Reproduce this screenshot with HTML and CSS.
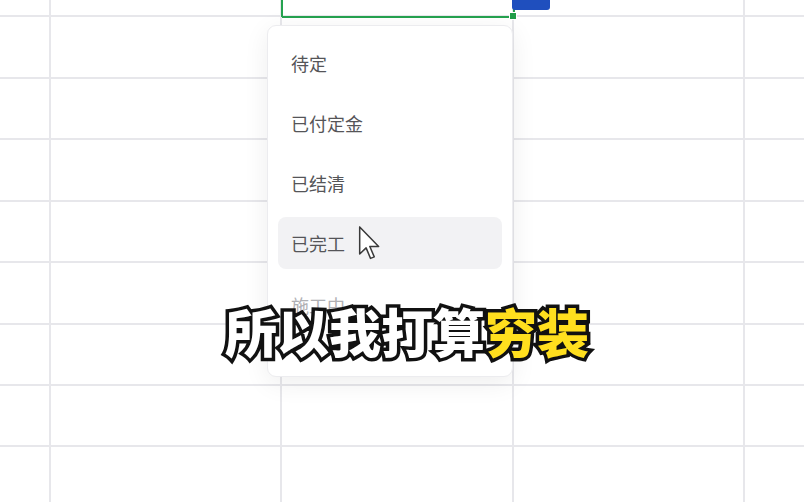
FILE: index.html
```html
<!DOCTYPE html>
<html lang="zh-CN">
<head>
<meta charset="utf-8">
<title>Sheet dropdown</title>
<link rel="stylesheet" href="styles.css">
</head>
<body>
<div class="stage">
  <div class="sheet">
    <div class="row">
      <div class="cell c1"></div><div class="cell c2"></div><div class="cell c3 selected"><span class="handle"></span></div><div class="cell c4"></div><div class="cell c5"></div>
    </div>
    <div class="row"><div class="cell c1"></div><div class="cell c2"></div><div class="cell c3"></div><div class="cell c4"></div><div class="cell c5"></div></div>
    <div class="row"><div class="cell c1"></div><div class="cell c2"></div><div class="cell c3"></div><div class="cell c4"></div><div class="cell c5"></div></div>
    <div class="row"><div class="cell c1"></div><div class="cell c2"></div><div class="cell c3"></div><div class="cell c4"></div><div class="cell c5"></div></div>
    <div class="row"><div class="cell c1"></div><div class="cell c2"></div><div class="cell c3"></div><div class="cell c4"></div><div class="cell c5"></div></div>
    <div class="row"><div class="cell c1"></div><div class="cell c2"></div><div class="cell c3"></div><div class="cell c4"></div><div class="cell c5"></div></div>
    <div class="row"><div class="cell c1"></div><div class="cell c2"></div><div class="cell c3"></div><div class="cell c4"></div><div class="cell c5"></div></div>
    <div class="row"><div class="cell c1"></div><div class="cell c2"></div><div class="cell c3"></div><div class="cell c4"></div><div class="cell c5"></div></div>
    <div class="row"><div class="cell c1"></div><div class="cell c2"></div><div class="cell c3"></div><div class="cell c4"></div><div class="cell c5"></div></div>
  </div>

  <div class="tag"></div>

  <div class="dropdown">
    <div class="item">待定</div>
    <div class="item">已付定金</div>
    <div class="item">已结清</div>
    <div class="item hover">已完工
      <svg class="cursor" width="22" height="36" viewBox="0 0 13 21" xmlns="http://www.w3.org/2000/svg">
        <path d="M1 1 L1 17 L4.8 13.4 L7.4 19.6 L9.6 18.7 L7 12.6 L12.2 12.6 Z" fill="#ffffff" stroke="#3a3a3a" stroke-width="0.9" stroke-linejoin="round"/>
      </svg>
    </div>
    <div class="item faded">施工中</div>
  </div>

  <div class="caption">所以我打算<span class="hl">穷装</span></div>
</div>
</body>
</html>
```

FILE: styles.css
```css
* { box-sizing: border-box; }
html, body {
  margin: 0;
  padding: 0;
  background: #ffffff;
}
.stage {
  position: relative;
  width: 804px;
  height: 502px;
  overflow: hidden;
  background: #ffffff;
  font-family: "Noto Sans CJK SC", "Noto Sans", sans-serif;
}
.sheet {
  margin-top: -44px;
  display: flex;
  flex-direction: column;
}
.row {
  display: flex;
  height: 61.43px;
  flex: none;
}
.cell {
  height: 100%;
  border-right: 2px solid #e7e7eb;
  border-bottom: 2px solid #e7e7eb;
  flex: none;
  position: relative;
}
.c1 { width: 51px; }
.c2 { width: 231px; }
.c3 { width: 232px; }
.c4 { width: 231px; }
.c5 { width: 80px; border-right: none; }

.selected {
  outline: 2px solid #25a24f;
  outline-offset: -1px;
}
.handle {
  position: absolute;
  right: -5px;
  bottom: -5px;
  width: 8px;
  height: 8px;
  background: #1f9d48;
  border: 1px solid #ffffff;
  z-index: 3;
}
.tag {
  position: absolute;
  left: 512px;
  top: 0;
  width: 38px;
  height: 10px;
  background: #1f4fbe;
  border-radius: 0 0 3px 3px;
  z-index: 2;
}

.dropdown {
  position: absolute;
  left: 267px;
  top: 25px;
  width: 246px;
  height: 352px;
  background: #ffffff;
  border: 1px solid #ececef;
  border-radius: 9px;
  box-shadow: 0 6px 26px rgba(0, 0, 0, 0.07);
  padding: 11px 10px 0 10px;
  display: flex;
  flex-direction: column;
  gap: 8px;
  overflow: hidden;
  z-index: 4;
}
.item {
  position: relative;
  height: 52px;
  flex: none;
  display: flex;
  align-items: center;
  padding-left: 13px;
  font-size: 18px;
  color: #555558;
  border-radius: 8px;
}
.item.hover {
  background: #f2f2f4;
}
.item.faded {
  color: #b0b0b4;
  margin-top: 2px;
}
.cursor {
  position: absolute;
  left: 80px;
  top: 8px;
}

.caption {
  position: absolute;
  left: 0;
  width: 804px;
  top: 299px;
  text-align: center;
  padding-left: 10px;
  font-size: 52px;
  line-height: 64px;
  font-weight: 900;
  color: #ffffff;
  -webkit-text-stroke: 7px #111111;
  paint-order: stroke fill;
  letter-spacing: 0;
  z-index: 6;
}
.hl {
  color: #ffdf1e;
}
```
